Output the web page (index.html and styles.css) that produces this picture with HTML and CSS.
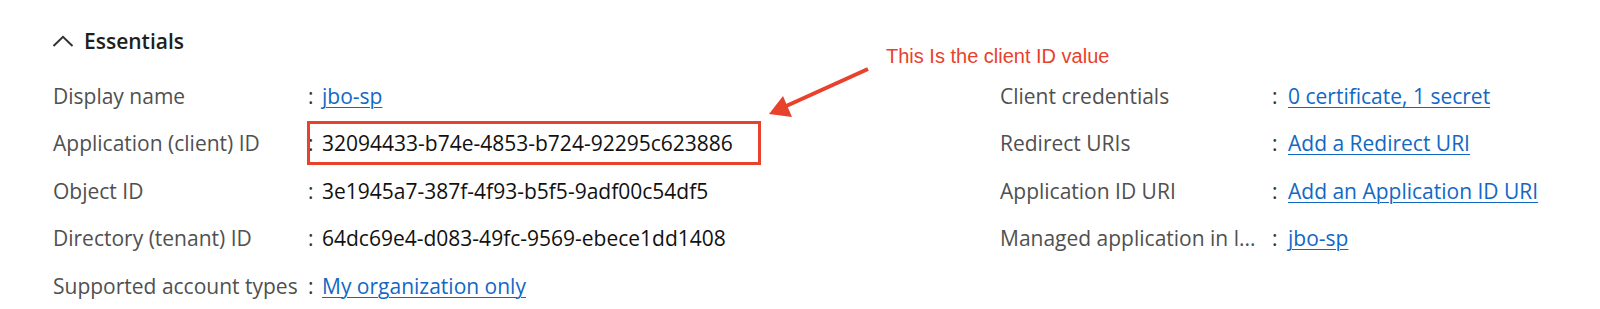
FILE: index.html
```html
<!DOCTYPE html>
<html lang="en">
<head>
<meta charset="utf-8">
<title>Essentials</title>
<link rel="stylesheet" href="styles.css">
</head>
<body>
<div class="panel">
  <div class="header">
    <svg class="chevron" width="22" height="12" viewBox="0 0 22 12" aria-hidden="true">
      <polyline points="1.5,11 11,1.8 20.5,11" fill="none" stroke="#323130" stroke-width="2"/>
    </svg>
    <span class="title">Essentials</span>
  </div>
  <div class="grid">
    <div class="col col-left">
      <div class="row"><span class="label">Display name</span><span class="colon">:</span><a class="value link" href="#">jbo-sp</a></div>
      <div class="row"><span class="label">Application (client) ID</span><span class="colon">:</span><span class="value">32094433-b74e-4853-b724-92295c623886</span></div>
      <div class="row"><span class="label">Object ID</span><span class="colon">:</span><span class="value">3e1945a7-387f-4f93-b5f5-9adf00c54df5</span></div>
      <div class="row"><span class="label">Directory (tenant) ID</span><span class="colon">:</span><span class="value">64dc69e4-d083-49fc-9569-ebece1dd1408</span></div>
      <div class="row"><span class="label">Supported account types</span><span class="colon">:</span><a class="value link" href="#">My organization only</a></div>
    </div>
    <div class="col col-right">
      <div class="row"><span class="label">Client credentials</span><span class="colon">:</span><a class="value link" href="#">0 certificate, 1 secret</a></div>
      <div class="row"><span class="label">Redirect URIs</span><span class="colon">:</span><a class="value link" href="#">Add a Redirect URI</a></div>
      <div class="row"><span class="label">Application ID URI</span><span class="colon">:</span><a class="value link" href="#">Add an Application ID URI</a></div>
      <div class="row"><span class="label" title="Managed application in local directory">Managed application in l...</span><span class="colon">:</span><a class="value link" href="#">jbo-sp</a></div>
    </div>
  </div>
  <div class="highlight-box"></div>
  <svg class="arrow" width="1600" height="309" viewBox="0 0 1600 309" aria-hidden="true">
    <line x1="868" y1="69" x2="784" y2="107" stroke="#e8412c" stroke-width="4"/>
    <polygon points="769,114 783,96 792,117" fill="#e8412c"/>
  </svg>
  <div class="annotation">This Is the client ID value</div>
</div>
</body>
</html>
```
FILE: styles.css
```css
html, body {
  margin: 0;
  padding: 0;
  background: #ffffff;
}

body {
  width: 1600px;
  height: 309px;
  overflow: hidden;
  font-family: "Open Sans", "Noto Sans", sans-serif;
  font-size: 21px;
  color: #1b1a19;
}

.panel {
  position: relative;
  width: 1600px;
  height: 309px;
}

.header {
  display: flex;
  align-items: center;
  height: 30px;
  padding-top: 26px;
  padding-left: 52px;
}

.chevron {
  display: block;
  margin-right: 10px;
}

.title {
  font-weight: 600;
  font-size: 21px;
  line-height: 30px;
  color: #201f1e;
}

.grid {
  display: flex;
  padding-top: 16px;
}

.col {
  display: flex;
  flex-direction: column;
}

.col-left {
  width: 947px;
  padding-left: 53px;
}

.col-right {
  flex: 1;
}

.row {
  display: grid;
  align-items: center;
  height: 47.5px;
  line-height: 28px;
}

.col-left .row {
  grid-template-columns: 255px 14px auto;
}

.col-right .row {
  grid-template-columns: 272px 16px auto;
}

.label {
  color: #505050;
  white-space: nowrap;
}

.colon {
  color: #323130;
}

.value {
  color: #111111;
  white-space: nowrap;
}

.link {
  color: #1268c4;
  text-decoration: underline;
  text-underline-offset: 3px;
  text-decoration-thickness: 1px;
}

.highlight-box {
  position: absolute;
  left: 307px;
  top: 121px;
  width: 454px;
  height: 44px;
  box-sizing: border-box;
  border: 3px solid #e8412c;
}

.arrow {
  position: absolute;
  left: 0;
  top: 0;
}

.annotation {
  position: absolute;
  left: 886px;
  top: 45px;
  font-family: "Liberation Sans", Arial, sans-serif;
  font-size: 20px;
  line-height: 22px;
  color: #e8412c;
  white-space: nowrap;
}
```
